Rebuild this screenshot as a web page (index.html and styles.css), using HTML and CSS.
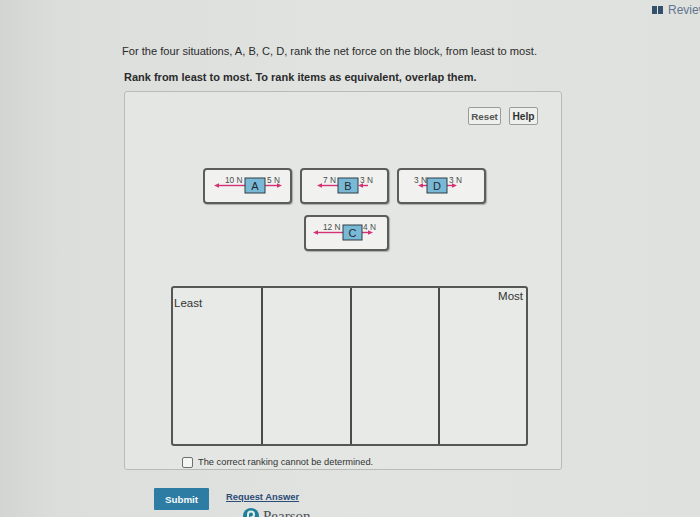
FILE: index.html
```html
<!DOCTYPE html>
<html>
<head>
<meta charset="utf-8">
<link rel="stylesheet" href="styles.css">
</head>
<body>
<header class="topbar">
  <a class="review"><svg class="review-icon" width="11" height="8" viewBox="0 0 11 8"><rect x="0" y="0" width="5" height="8" fill="#34506c"/><rect x="6" y="0" width="5" height="8" fill="#34506c"/></svg>Review</a>
</header>
<main class="content">
  <p class="q">For the four situations, A, B, C, D, rank the net force on the block, from least to most.</p>
  <p class="instr">Rank from least to most. To rank items as equivalent, overlap them.</p>
  <section class="panel">
    <div class="tools">
      <button class="tool reset">Reset</button>
      <button class="tool help">Help</button>
    </div>
    <div class="pool">
      <div class="row row1">
        <div class="card">
          <svg class="fig" viewBox="0 0 85 32" width="85" height="32">
            <line x1="13" y1="15.5" x2="40" y2="15.5" class="ar"/><polygon points="9,15.5 14,13.3 14,17.7" class="ah"/>
            <line x1="60" y1="15.5" x2="73" y2="15.5" class="ar"/><polygon points="77,15.5 72,13.3 72,17.7" class="ah"/>
            <rect x="40" y="8" width="20" height="15" class="blk"/>
            <text x="20" y="12.5" class="lbl">10 N</text><text x="62" y="12.5" class="lbl">5 N</text>
            <text x="50" y="20" class="let">A</text>
          </svg>
        </div>
        <div class="card">
          <svg class="fig" viewBox="0 0 85 32" width="85" height="32">
            <line x1="19" y1="15.5" x2="36" y2="15.5" class="ar"/><polygon points="15,15.5 20,13.3 20,17.7" class="ah"/>
            <line x1="60" y1="15.5" x2="66" y2="15.5" class="ar"/><polygon points="56,15.5 61,13.3 61,17.7" class="ah"/>
            <rect x="36" y="8" width="20" height="15" class="blk"/>
            <text x="21" y="12.5" class="lbl">7 N</text><text x="58" y="12.5" class="lbl">3 N</text>
            <text x="46" y="20" class="let">B</text>
          </svg>
        </div>
        <div class="card">
          <svg class="fig" viewBox="0 0 85 32" width="85" height="32">
            <line x1="23" y1="15.5" x2="28" y2="15.5" class="ar"/><polygon points="19,15.5 24,13.3 24,17.7" class="ah"/>
            <line x1="48" y1="15.5" x2="54" y2="15.5" class="ar"/><polygon points="58,15.5 53,13.3 53,17.7" class="ah"/>
            <rect x="28" y="8" width="20" height="15" class="blk"/>
            <text x="15" y="12.5" class="lbl">3 N</text><text x="50" y="12.5" class="lbl">3 N</text>
            <text x="38" y="20" class="let">D</text>
          </svg>
        </div>
      </div>
      <div class="row row2">
        <div class="card card-c">
          <svg class="fig" viewBox="0 0 81 32" width="81" height="32">
            <line x1="11" y1="15.5" x2="37" y2="15.5" class="ar"/><polygon points="7,15.5 12,13.3 12,17.7" class="ah"/>
            <line x1="56" y1="15.5" x2="63" y2="15.5" class="ar"/><polygon points="67,15.5 62,13.3 62,17.7" class="ah"/>
            <rect x="37" y="8" width="19" height="15" class="blk"/>
            <text x="17" y="12.5" class="lbl">12 N</text><text x="57" y="12.5" class="lbl">4 N</text>
            <text x="46.5" y="20" class="let">C</text>
          </svg>
        </div>
      </div>
    </div>
    <div class="rank">
      <div class="col"><span class="least">Least</span></div>
      <div class="col"></div>
      <div class="col"></div>
      <div class="col col-last"><span class="most">Most</span></div>
    </div>
    <label class="cant"><span class="box"></span>The correct ranking cannot be determined.</label>
  </section>
  <div class="actions">
    <button class="submit">Submit</button>
    <a class="req">Request Answer</a>
  </div>
  <div class="pearson">
    <svg class="plogo" width="16" height="16" viewBox="0 0 16 16"><circle cx="8" cy="8" r="8" fill="#1d7f9c"/><path d="M5 13 V6.5 A3 3 0 1 1 8 9.5 H7" fill="none" stroke="#e6ece9" stroke-width="2"/></svg>
    <span class="pname">Pearson</span>
  </div>
</main>
</body>
</html>
```
FILE: styles.css
```css
html, body {
  margin: 0;
  padding: 0;
}
body {
  width: 700px;
  height: 517px;
  overflow: hidden;
  background: linear-gradient(90deg, #d3d5d3 0px, #dcdedc 60px, #e1e3e0 350px, #dfe1de 700px);
  font-family: "Liberation Sans", Arial, sans-serif;
  color: #2a2a2a;
}
.topbar {
  height: 14px;
  padding-left: 652px;
  white-space: nowrap;
  overflow: hidden;
}
.review {
  display: inline-flex;
  align-items: center;
  gap: 5px;
  font-size: 12px;
  line-height: 14px;
  color: #5f7690;
  text-decoration: underline;
}
.review-icon {
  display: block;
}
.content {
  padding-left: 122px;
}
.q {
  margin: 30px 0 0 0;
  font-size: 11.1px;
  line-height: 14px;
  color: #2b2b2b;
}
.instr {
  margin: 12px 0 0 2px;
  font-size: 11px;
  line-height: 14px;
  font-weight: bold;
  color: #2b2b2b;
}
.panel {
  margin: 7px 0 0 2px;
  width: 436px;
  height: 377px;
  border: 1px solid #b9bbb8;
  border-radius: 3px;
  background: #e4e6e3;
  display: flex;
  flex-direction: column;
}
.tools {
  display: flex;
  justify-content: flex-end;
  gap: 8px;
  padding: 15px 23px 0 0;
}
.tool {
  height: 18px;
  padding: 0;
  border: 1px solid #9a9c99;
  border-radius: 2px;
  background: #eef0ed;
  font-family: "Liberation Sans", Arial, sans-serif;
  font-weight: bold;
  font-size: 9.8px;
  color: #555;
}
.reset { width: 33px; }
.help { width: 29px; color: #333; font-size: 10.2px; }
.pool {
  display: flex;
  flex-direction: column;
  gap: 11px;
  margin-top: 43px;
}
.row {
  display: flex;
  gap: 8px;
}
.row1 { margin-left: 78px; }
.row2 { margin-left: 179px; }
.card {
  width: 85px;
  height: 32px;
  border: 2px solid #5b5d5c;
  border-radius: 4px;
  background: #f1f2f0;
  box-shadow: 1px 1px 1px rgba(0,0,0,0.25);
}
.card-c { width: 81px; }
.fig { display: block; }
.ar { stroke: #d33275; stroke-width: 1.4; }
.ah { fill: #d33275; }
.blk { fill: #79b9d6; stroke: #2f3c44; stroke-width: 1; }
.lbl {
  font-family: "Liberation Sans", Arial, sans-serif;
  font-size: 8.3px;
  fill: #4a4a4a;
}
.let {
  font-family: "Liberation Sans", Arial, sans-serif;
  font-size: 11px;
  fill: #1e2a30;
  text-anchor: middle;
}
.rank {
  margin: 35px 0 0 46px;
  width: 353px;
  height: 156px;
  border: 2px solid #555756;
  border-radius: 3px;
  background: #e8eae7;
  display: grid;
  grid-template-columns: repeat(4, 1fr);
}
.col {
  border-left: 2px solid #4a4c4b;
  position: relative;
}
.col:first-child { border-left: none; }
.least {
  display: block;
  margin: 8px 0 0 1px;
  font-size: 11.5px;
  line-height: 14px;
  color: #333;
}
.most {
  display: block;
  text-align: right;
  margin: 1px 3px 0 0;
  font-size: 11.5px;
  line-height: 14px;
  color: #333;
}
.cant {
  display: flex;
  align-items: center;
  gap: 5px;
  margin: 10px 0 0 57px;
  font-size: 9.3px;
  line-height: 12px;
  color: #333;
}
.box {
  width: 9px;
  height: 9px;
  border: 1px solid #6e706f;
  border-radius: 2px;
  background: #f4f5f3;
}
.actions {
  display: flex;
  align-items: center;
  gap: 17px;
  margin: 18px 0 0 32px;
}
.submit {
  width: 55px;
  height: 22px;
  padding: 0;
  border: none;
  border-radius: 1px;
  background: #2d7ca3;
  color: #f4f8fa;
  font-family: "Liberation Sans", Arial, sans-serif;
  font-weight: bold;
  font-size: 9.8px;
}
.req {
  font-size: 9.4px;
  font-weight: bold;
  color: #2c4c78;
  text-decoration: underline;
  margin-top: -6px;
}
.pearson {
  display: flex;
  align-items: flex-start;
  gap: 4px;
  margin: -2px 0 0 121px;
}
.plogo { display: block; }
.pname {
  font-family: "Liberation Serif", serif;
  font-size: 15px;
  line-height: 15px;
  color: #4a4e52;
  margin-top: 1px;
}
```
